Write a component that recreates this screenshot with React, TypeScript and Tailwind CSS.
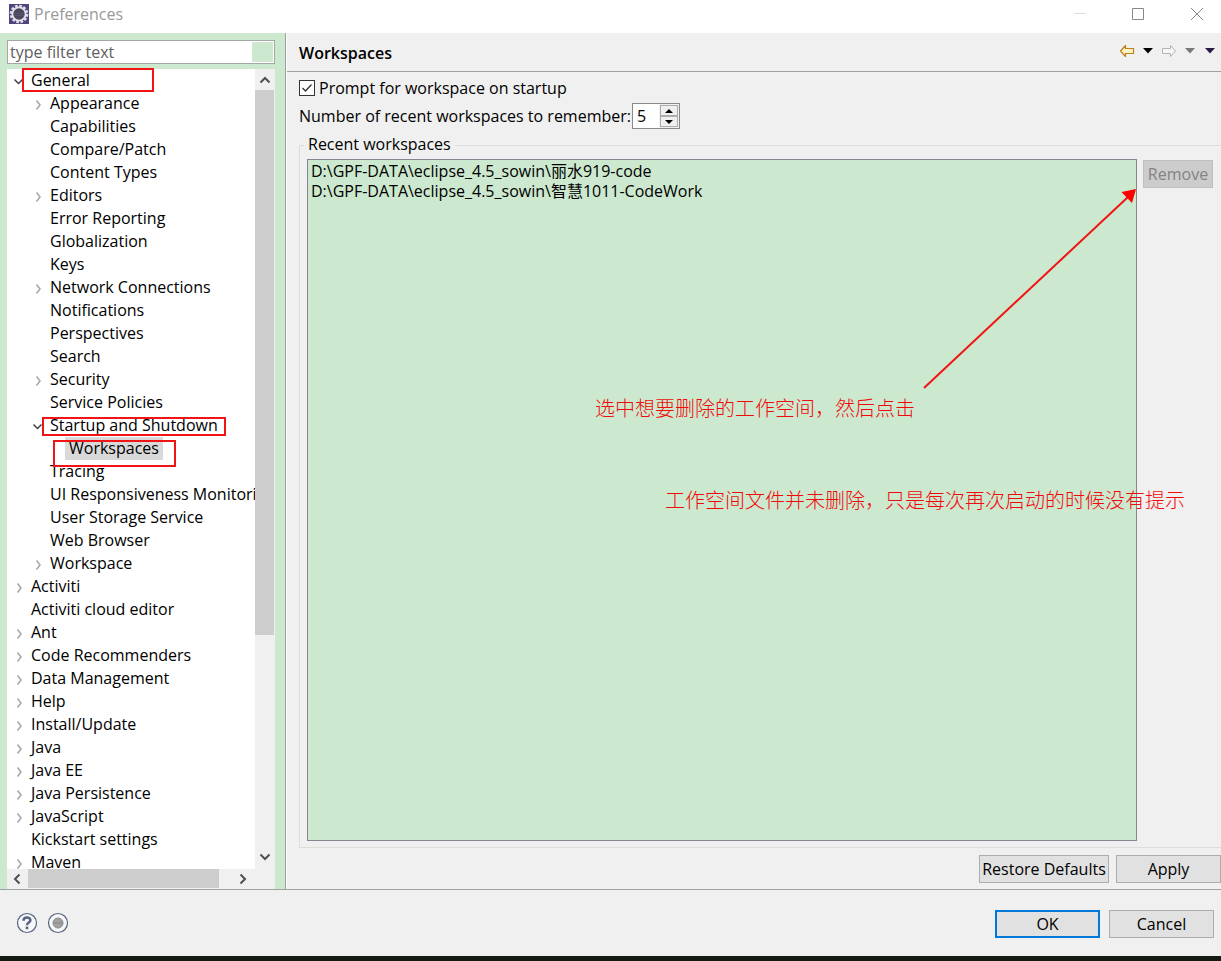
import { useState } from 'react'
import { clsx } from 'clsx'

type TreeNode = {
  label: string
  level: 0 | 1 | 2
  state?: 'open' | 'closed'
}

/* ================= DATA ================= */
const treeNodes: TreeNode[] = [
  { label: 'General', level: 0, state: 'open' },
  { label: 'Appearance', level: 1, state: 'closed' },
  { label: 'Capabilities', level: 1 },
  { label: 'Compare/Patch', level: 1 },
  { label: 'Content Types', level: 1 },
  { label: 'Editors', level: 1, state: 'closed' },
  { label: 'Error Reporting', level: 1 },
  { label: 'Globalization', level: 1 },
  { label: 'Keys', level: 1 },
  { label: 'Network Connections', level: 1, state: 'closed' },
  { label: 'Notifications', level: 1 },
  { label: 'Perspectives', level: 1 },
  { label: 'Search', level: 1 },
  { label: 'Security', level: 1, state: 'closed' },
  { label: 'Service Policies', level: 1 },
  { label: 'Startup and Shutdown', level: 1, state: 'open' },
  { label: 'Workspaces', level: 2 },
  { label: 'Tracing', level: 1 },
  { label: 'UI Responsiveness Monitoring', level: 1 },
  { label: 'User Storage Service', level: 1 },
  { label: 'Web Browser', level: 1 },
  { label: 'Workspace', level: 1, state: 'closed' },
  { label: 'Activiti', level: 0, state: 'closed' },
  { label: 'Activiti cloud editor', level: 0 },
  { label: 'Ant', level: 0, state: 'closed' },
  { label: 'Code Recommenders', level: 0, state: 'closed' },
  { label: 'Data Management', level: 0, state: 'closed' },
  { label: 'Help', level: 0, state: 'closed' },
  { label: 'Install/Update', level: 0, state: 'closed' },
  { label: 'Java', level: 0, state: 'closed' },
  { label: 'Java EE', level: 0, state: 'closed' },
  { label: 'Java Persistence', level: 0, state: 'closed' },
  { label: 'JavaScript', level: 0, state: 'closed' },
  { label: 'Kickstart settings', level: 0 },
  { label: 'Maven', level: 0, state: 'closed' },
]

const recentWorkspaces = [
  'D:\\GPF-DATA\\eclipse_4.5_sowin\\丽水919-code',
  'D:\\GPF-DATA\\eclipse_4.5_sowin\\智慧1011-CodeWork',
]

const indent = {
  0: 'pl-1',
  1: 'pl-[23px]',
  2: 'pl-[42px]',
}

const chevronPaths = {
  up: 'M3.5 10.5 8 6l4.5 4.500',
  down: 'M3.5 5.5 8 10l4.500-4.500',
  left: 'M10.5 3.5 6 8l4.500 4.500',
  right: 'M5.5 3.5 10 8l-4.500 4.500',
}

/* ================= ICONS ================= */
function EclipseIcon() {
  return (
    <svg width="20" height="20" viewBox="0 0 20 20" aria-hidden="true">
      <rect width="20" height="20" fill="#51437c" />
      <circle cx="10" cy="10" r="8" fill="none" stroke="#e4e0ea" strokeWidth="2.6" strokeDasharray="2.6 1.59" />
      <circle cx="10" cy="10" r="6.6" fill="#4a4a5c" stroke="#e4e0ea" strokeWidth="1.8" />
      <path d="M5 9.500h10M5 11.500h10" stroke="#5b5675" strokeWidth="0.8" />
    </svg>
  )
}

function ScrollArrow({ dir }: { dir: keyof typeof chevronPaths }) {
  return (
    <button type="button" aria-label={`Scroll ${dir}`} className="flex size-5 shrink-0 items-center justify-center">
      <svg width="16" height="16" viewBox="0 0 16 16" fill="none" stroke="#505050" strokeWidth="2">
        <path d={chevronPaths[dir]} />
      </svg>
    </button>
  )
}

function Expander({ open }: { open: boolean }) {
  return (
    <button type="button" aria-label={open ? 'Collapse' : 'Expand'} className="flex size-4 items-center justify-center">
      {open ? (
        <svg width="16" height="16" viewBox="0 0 16 16" fill="none" stroke="#404040" strokeWidth="1.5">
          <path d="M3.500 6.500 7.500 10.500l4-4" />
        </svg>
      ) : (
        <svg width="16" height="16" viewBox="0 0 16 16" fill="none" stroke="#a6a6a6" strokeWidth="1.5">
          <path d="M6.500 4.500l3.500 4.500-3.500 4.500" />
        </svg>
      )}
    </button>
  )
}

function NavArrow({ forward }: { forward?: boolean }) {
  return (
    <svg width="16" height="16" viewBox="0 0 16 16">
      {forward ? (
        <path d="M14.500 8 9.500 2.500v3H1.500v5h8v3z" fill="#f6f6f6" stroke="#b4b4b4" strokeLinejoin="round" />
      ) : (
        <path d="M1.500 8l5-5.500v3h8v5h-8v3z" fill="#fff3bd" stroke="#b9811f" strokeWidth="1.2" strokeLinejoin="round" />
      )}
    </svg>
  )
}

function Caret({ className }: { className: string }) {
  return (
    <svg width="10" height="6" viewBox="0 0 10 6" className={className}>
      <path d="M0 0h10L5 5.500z" fill="currentColor" />
    </svg>
  )
}

/* ================= PARTS ================= */
function TitleBar() {
  return (
    <header className="flex h-[33px] shrink-0 items-start bg-white pl-[9px]">
      <div className="flex h-7 items-center gap-[5px] text-[#999]">
        <EclipseIcon />
        <h1>Preferences</h1>
      </div>
      <div className="ml-auto flex h-7 items-center text-[#999]">
        <button type="button" aria-label="Minimize" className="flex w-[58px] justify-center">
          <svg width="14" height="14" viewBox="0 0 14 14"><path d="M1 6.500h12" stroke="#ddd" /></svg>
        </button>
        <button type="button" aria-label="Maximize" className="flex w-[58px] justify-center">
          <svg width="14" height="14" viewBox="0 0 14 14"><path d="M1.500 1.500h11v11h-11z" fill="none" stroke="#888" /></svg>
        </button>
        <button type="button" aria-label="Close" className="mr-[-5px] flex w-[59px] justify-center">
          <svg width="14" height="14" viewBox="0 0 14 14"><path d="M1 1l12 12M13 1 1 13" stroke="#888" /></svg>
        </button>
      </div>
    </header>
  )
}

function Sidebar() {
  const [selected, setSelected] = useState('Workspaces')

  return (
    <aside className="flex w-[286px] shrink-0 flex-col border-r border-[#a0a0a0] bg-[#cce8cf] pt-[7px] pr-[10px] pl-[7px]">
      <div className="flex h-6 shrink-0 border border-[#a3a8a3] bg-white">
        <input
          type="text"
          aria-label="Filter"
          placeholder="type filter text"
          className="min-w-0 flex-1 px-0.5 leading-5 outline-none placeholder:text-[#606060]"
        />
        <span className="my-px mr-px w-[21px] bg-[#cce8cf]" />
      </div>

      <div className="mt-[5px] flex min-h-0 flex-1 bg-white">
        <ul className="min-w-0 flex-1 overflow-hidden">
          {treeNodes.map((node) => (
            <li key={node.label} className={clsx('flex h-[23px] items-center', indent[node.level])}>
              <span className="w-4 shrink-0">{node.state && <Expander open={node.state === 'open'} />}</span>
              <button
                type="button"
                onClick={() => setSelected(node.label)}
                className={clsx('h-full px-1 pb-0.5 whitespace-nowrap', selected === node.label && 'bg-[#d9d9d9]')}
              >
                {node.label}
              </button>
            </li>
          ))}
        </ul>
        <div className="flex w-5 shrink-0 flex-col bg-[#f0f0f0] pt-px pb-0.5">
          <ScrollArrow dir="up" />
          <div className="flex-1">
            <div className="h-[72%] w-[19px] bg-[#cdcdcd]" />
          </div>
          <ScrollArrow dir="down" />
        </div>
      </div>
      <div className="flex h-5 shrink-0 bg-[#f0f0f0] pr-[22px]">
        <ScrollArrow dir="left" />
        <div className="flex-1 pl-px">
          <div className="h-[19px] w-[93%] bg-[#cdcdcd]" />
        </div>
        <ScrollArrow dir="right" />
      </div>
    </aside>
  )
}

function PageHeader() {
  return (
    <div className="flex h-[39px] shrink-0 items-center border-b border-[#a0a0a0] pt-0.5 pr-1.5 pl-3">
      <h2 className="font-semibold">Workspaces</h2>
      <div className="mb-1 ml-auto flex items-center">
        <button type="button" aria-label="Back"><NavArrow /></button>
        <button type="button" aria-label="Back history" className="ml-2"><Caret className="text-black" /></button>
        <button type="button" aria-label="Forward" className="ml-2"><NavArrow forward /></button>
        <button type="button" aria-label="Forward history" className="ml-2"><Caret className="text-[#7a7a7a]" /></button>
        <button type="button" aria-label="Menu" className="ml-2.5"><Caret className="text-[#2b1a45]" /></button>
      </div>
    </div>
  )
}

function Options() {
  const [prompt, setPrompt] = useState(true)
  const [count, setCount] = useState(5)

  return (
    <div className="shrink-0 px-3 pt-1">
      <label className="flex h-6 items-center gap-1">
        <span className="relative size-4">
          <input
            type="checkbox"
            checked={prompt}
            onChange={(e) => setPrompt(e.target.checked)}
            className="peer block size-4 appearance-none border border-[#333] bg-white"
          />
          <svg viewBox="0 0 16 16" className="pointer-events-none absolute inset-0 hidden size-4 peer-checked:block">
            <path d="M3.500 8l3 3 6-6.500" fill="none" stroke="#333" strokeWidth="1.3" />
          </svg>
        </span>
        Prompt for workspace on startup
      </label>
      <div className="mt-[3px] flex h-[26px] items-center gap-px">
        <label htmlFor="count">Number of recent workspaces to remember:</label>
        <div className="flex h-[26px] w-12 border border-[#8a8a8a] bg-white">
          <input
            id="count"
            type="text"
            value={count}
            onChange={(e) => setCount(Number(e.target.value) || 0)}
            className="min-w-0 flex-1 pl-1 outline-none"
          />
          <div className="flex w-5 flex-col bg-[#f0f0f0] p-px">
            <button type="button" aria-label="Increase" onClick={() => setCount(count + 1)} className="flex flex-1 items-center justify-center border border-[#adadad]">
              <svg width="8" height="4" viewBox="0 0 8 4"><path d="M0 4h8L4 0z" /></svg>
            </button>
            <button type="button" aria-label="Decrease" onClick={() => setCount(count - 1)} className="flex flex-1 items-center justify-center border border-[#adadad]">
              <svg width="8" height="4" viewBox="0 0 8 4"><path d="M0 0h8L4 4z" /></svg>
            </button>
          </div>
        </div>
      </div>
    </div>
  )
}

function RecentWorkspaces() {
  return (
    <fieldset className="mt-0.5 ml-3 flex min-h-0 min-w-0 flex-1 flex-col border border-r-0 border-[#dcdcdc] pr-2 pb-1.5 pl-[7px]">
      <legend className="-ml-[3px] h-7 px-1 leading-[26px]">Recent workspaces</legend>
      <div className="flex min-h-0 flex-1 gap-1.5">
        <ul className="min-w-0 flex-1 border border-[#828790] bg-[#cce8cf] px-[3px] pt-px">
          {recentWorkspaces.map((path) => (
            <li key={path} className="h-5 leading-5">{path}</li>
          ))}
        </ul>
        <button type="button" disabled className="mt-px h-7 w-[70px] border border-[#bfbfbf] bg-[#ccc] text-[#838383]">
          Remove
        </button>
      </div>
    </fieldset>
  )
}

/* red marks drawn over the window */
function Annotations() {
  return (
    <div className="pointer-events-none absolute inset-0 overflow-hidden text-xl leading-7 text-[#f00a0a]">
      <svg className="absolute inset-0 size-full" fill="none" stroke="#f01414" strokeWidth="2">
        <rect x="23" y="69" width="130" height="22" />
        <rect x="43" y="418" width="182" height="17" />
        <rect x="54" y="441" width="121" height="25" />
        <path d="M924 388 1128 197" />
        <path d="M1136 189l-14.500 3 10.500 11z" fill="#f00" stroke="none" />
      </svg>
      <p className="absolute top-[395px] left-[595px] font-light whitespace-nowrap">选中想要删除的工作空间，然后点击</p>
      <p className="absolute top-[487px] left-[665px] font-light whitespace-nowrap">工作空间文件并未删除，只是每次再次启动的时候没有提示</p>
    </div>
  )
}

/* ================= COMPONENT ================= */
export default function App() {
  return (
    <div className="relative flex h-screen flex-col border-b-[5px] border-[#141a14] bg-[#f0f0f0] font-['Open_Sans','Noto_Sans_CJK_SC',sans-serif] text-base leading-[22px] text-black">
      <TitleBar />

      <div className="flex min-h-0 flex-1">
        <Sidebar />
        <main className="flex min-w-0 flex-1 flex-col border-l border-white">
          <PageHeader />
          <Options />
          <RecentWorkspaces />
          <div className="flex shrink-0 justify-end gap-[7px] pt-[7px] pb-1.5">
            <button type="button" className="h-7 w-[130px] border border-[#adadad] bg-[#e1e1e1]">Restore Defaults</button>
            <button type="button" className="h-7 w-[105px] border border-[#adadad] bg-[#e1e1e1]">Apply</button>
          </div>
        </main>
      </div>

      <footer className="flex h-[67px] shrink-0 items-center border-t border-[#a0a0a0] pr-[7px] pl-4">
        <div className="flex gap-[9px]">
          <button type="button" aria-label="Help">
            <svg width="22" height="22" viewBox="0 0 22 22" fill="none" stroke="#56647f">
              <circle cx="11" cy="11" r="9.500" fill="#f6f7f9" strokeWidth="1.2" />
              <path d="M7.500 8.800c0-4.500 7-4.200 6.900-.6 0 2.500-3.400 2.200-3.400 5" strokeWidth="2.500" />
              <path d="M11 14.600v2.600" strokeWidth="2.600" />
            </svg>
          </button>
          <button type="button" aria-label="Record">
            <svg width="22" height="22" viewBox="0 0 22 22">
              <circle cx="11" cy="11" r="9.500" fill="#f6f7f9" stroke="#56647f" strokeWidth="1.2" />
              <circle cx="11" cy="11" r="5" fill="#a2a2a2" stroke="#8a8a8a" />
              <path d="M6.500 11h9" stroke="#878787" />
            </svg>
          </button>
        </div>
        <div className="mt-0.5 ml-auto flex gap-[9px]">
          <button type="button" className="h-7 w-[105px] border-2 border-[#0078d7] bg-[#e1e1e1]">OK</button>
          <button type="button" className="h-7 w-[105px] border border-[#adadad] bg-[#e1e1e1]">Cancel</button>
        </div>
      </footer>

      <Annotations />
    </div>
  )
}
